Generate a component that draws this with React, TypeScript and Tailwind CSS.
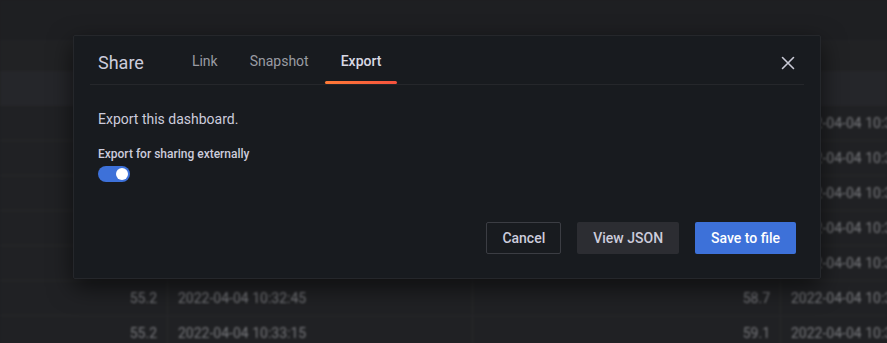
import type { ReactNode } from 'react';

const rows = [
  { a: '55.1', t1: '10:30:15', b: '58.2', t2: '10:30:15' },
  { a: '55.1', t1: '10:30:45', b: '58.4', t2: '10:30:45' },
  { a: '55.2', t1: '10:31:15', b: '58.4', t2: '10:31:15' },
  { a: '55.2', t1: '10:31:45', b: '58.5', t2: '10:31:45' },
  { a: '55.2', t1: '10:32:15', b: '58.6', t2: '10:32:15' },
  { a: '55.2', t1: '10:32:45', b: '58.7', t2: '10:32:45' },
  { a: '55.2', t1: '10:33:15', b: '59.1', t2: '10:33:15' },
];

function Cell({ children, right, w }: { children?: ReactNode; right?: boolean; w: string }) {
  return (
    <div
      className={`${w} shrink-0 h-full flex items-center border-r border-[#2c2d31] px-[10px] whitespace-nowrap ${
        right ? 'justify-end' : 'justify-start'
      }`}
    >
      {children}
    </div>
  );
}

function Background() {
  return (
    <div className="absolute inset-0 bg-[#222326] blur-[1.2px]">
      {/* panel top */}
      <div className="h-[40px] bg-[#222326]" />
      <div className="h-[31px] bg-[#252629]" />
      {/* table header */}
      <div className="h-[35px] bg-[#2a2b2f]" />
      {rows.map((r, i) => (
        <div
          key={i}
          className="h-[35px] flex text-[14px] text-[#8a8b90] border-b border-[#2b2c30] bg-[#242528]"
        >
          <Cell w="w-[168px]" right>
            {r.a}
          </Cell>
          <Cell w="w-[305px]">2022-04-04 {r.t1}</Cell>
          <Cell w="w-[308px]" right>
            {r.b}
          </Cell>
          <Cell w="w-[200px]">2022-04-04 {r.t2}</Cell>
        </div>
      ))}
    </div>
  );
}

export default function App() {
  return (
    <div
      className="relative w-[887px] h-[343px] overflow-hidden bg-[#222326]"
      style={{ fontFamily: 'Roboto, "Liberation Sans", sans-serif' }}
    >
      <Background />
      {/* overlay */}
      <div className="absolute inset-0 bg-[#0b0c0e]/15" />

      {/* Modal */}
      <div className="absolute left-[73px] top-[35px] w-[748px] bg-[#181b1f] border border-[#25272b] rounded-[2px] shadow-[0_8px_24px_rgba(0,0,0,0.6)] text-[#ccccdc]">
        {/* Header */}
        <div className="mx-4 h-[49px] flex items-end border-b border-[#25272b]">
          <div className="pl-2 h-full flex items-center pt-[5px] text-[18px] text-[#ccccdc] mr-8">Share</div>
          <div className="flex h-full">
            <div className="px-4 h-full flex items-center pt-[3px] text-[14px] text-[#9a9ba3]">Link</div>
            <div className="px-4 h-full flex items-center pt-[3px] text-[14px] text-[#9a9ba3]">Snapshot</div>
            <div className="relative px-4 h-full flex items-center pt-[3px] text-[14px] font-medium text-[#d8d9e4]">
              Export
              <div className="absolute left-0 right-0 bottom-0 h-[3px] rounded-[2px] bg-gradient-to-r from-[#ff7a36] to-[#f5513d]" />
            </div>
          </div>
          <div className="ml-auto h-full flex items-center pr-[8px] pt-[6px]">
            <svg width="16" height="16" viewBox="0 0 16 16" fill="none" stroke="#c9cad6" strokeWidth="1.6" strokeLinecap="round">
              <path d="M2.5 2.5 L13.5 13.5 M13.5 2.5 L2.5 13.5" />
            </svg>
          </div>
        </div>

        {/* Body */}
        <div className="px-6 pt-6 pb-6">
          <p className="text-[14px] leading-[20px] text-[#ccccdc]">Export this dashboard.</p>
          <div className="mt-[17px] text-[12px] leading-[16px] font-medium text-[#ccccdc]">
            Export for sharing externally
          </div>
          <div className="mt-1 w-[32px] h-[16px] rounded-full bg-[#3d71d9] flex items-center justify-end pr-[2px]">
            <div className="w-[12px] h-[12px] rounded-full bg-white" />
          </div>

          <div className="mt-10 flex justify-end gap-4">
            <button className="h-[32px] px-[15px] rounded-[2px] border border-[#3b3d43] text-[14px] font-medium text-[#ccccdc]">
              Cancel
            </button>
            <button className="h-[32px] px-4 rounded-[2px] bg-[#2c2d32] text-[14px] font-medium text-[#ccccdc]">
              View JSON
            </button>
            <button className="h-[32px] px-4 rounded-[2px] bg-[#3d71d9] text-[14px] font-medium text-white">
              Save to file
            </button>
          </div>
        </div>
      </div>
    </div>
  );
}
